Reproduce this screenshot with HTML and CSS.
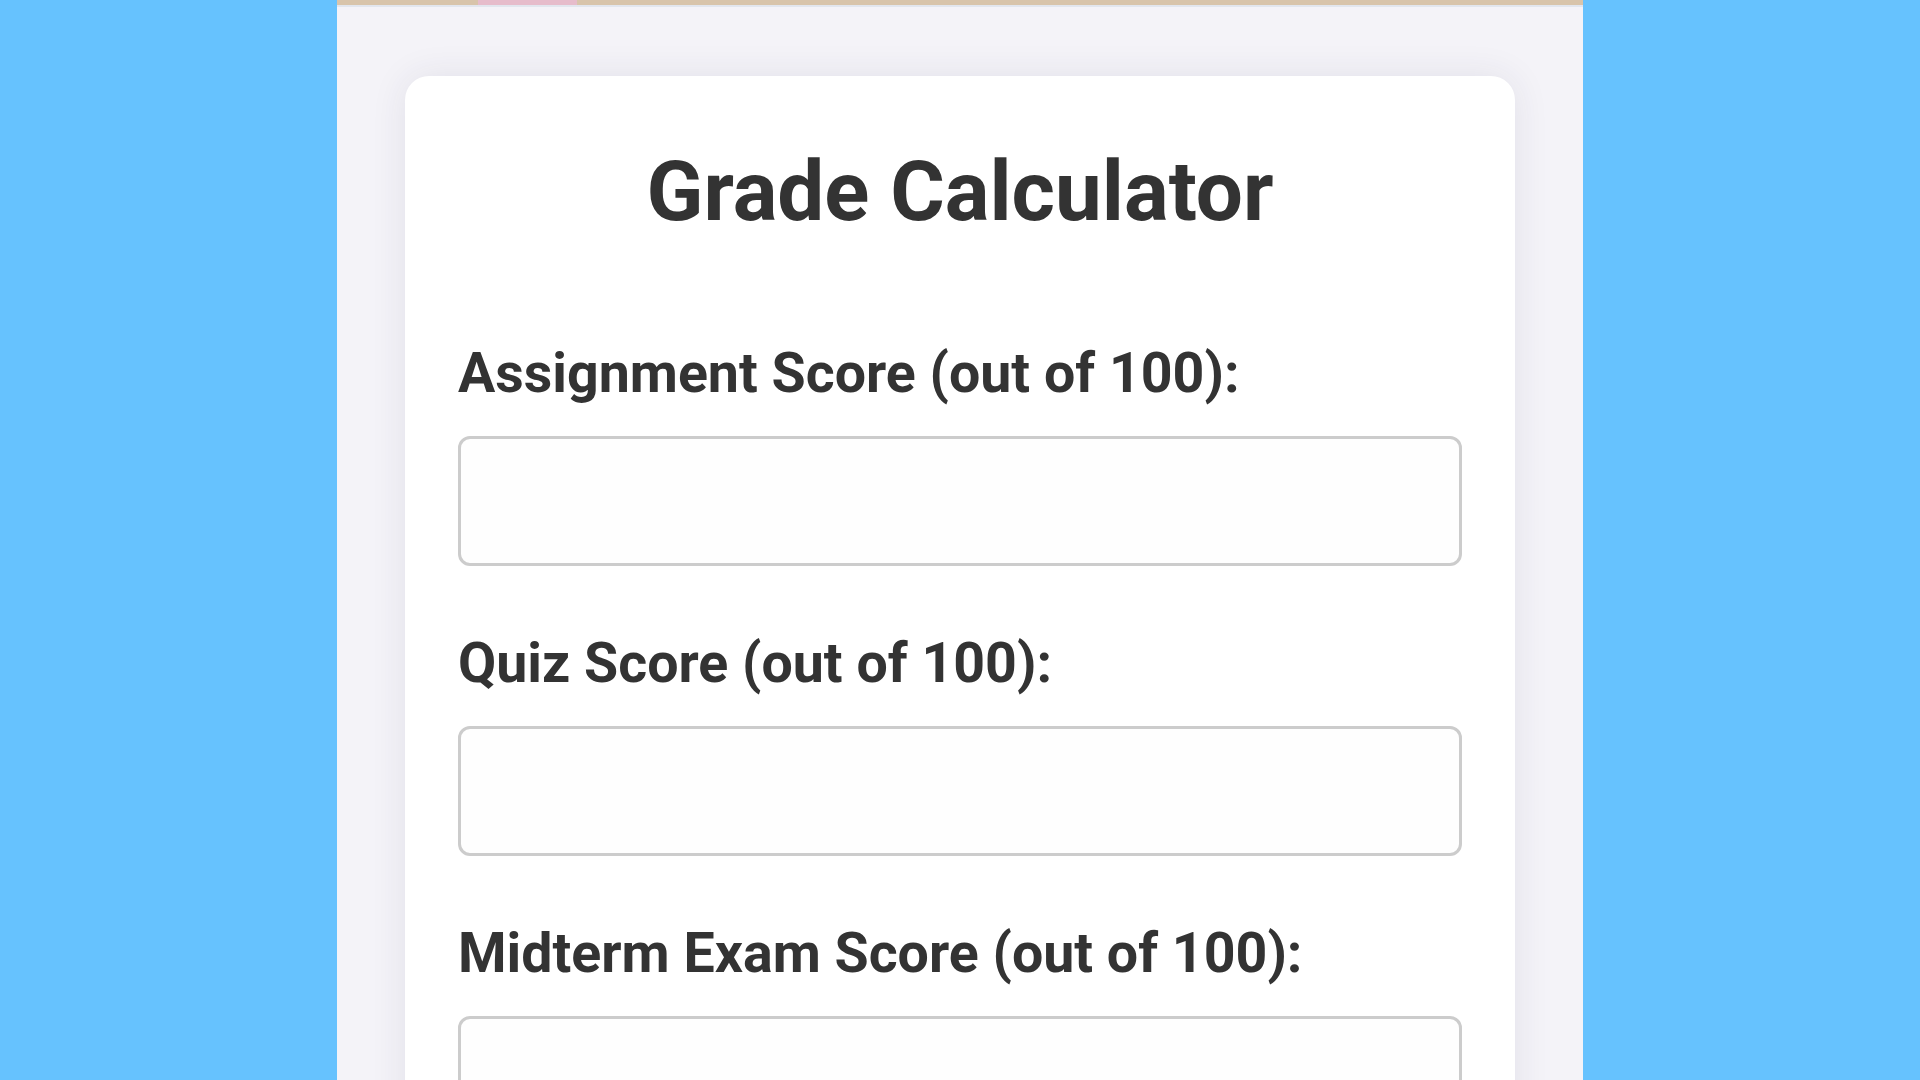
FILE: index.html
```html
<html>
    <head>
        <link rel="stylesheet" href="styles.css">
    </head>
    <body>
        <div class="page">
            <div class="strip"></div>
            <div class="calculator">
                <h1 class="title">Grade Calculator</h1>
                <form class="form">
                    <label class="field-label" for="assignment">Assignment Score (out of 100):</label>
                    <input class="field-input" type="number" id="assignment" />
                    <label class="field-label" for="quiz">Quiz Score (out of 100):</label>
                    <input class="field-input" type="number" id="quiz" />
                    <label class="field-label" for="midterm">Midterm Exam Score (out of 100):</label>
                    <input class="field-input" type="number" id="midterm" />
                </form>
            </div>
        </div>
    </body>
</html>
```

FILE: styles.css
```css
:root {
    --c-sky: #66c2fe;
    --c-page: #f4f3f8;
    --c-card: #ffffff;
    --c-text: #333333;
    --c-border: #cccccc;
    --s-card: 53px;
}
html, body {
    margin: 0;
    padding: 0;
}

body {
    background-color: var(--c-sky);
    font-family: Roboto, "Liberation Sans", sans-serif;
    color: var(--c-text);
    overflow: hidden;
}

.page {
    width: 1246px;
    min-height: 100vh;
    margin: 0 auto;
    background-color: var(--c-page);
    display: flow-root;
}

.strip {
    height: 5px;
    background: linear-gradient(to right, #d8c4ab 0, #d8c4ab 141px, #e6bccb 141px, #e6bccb 240px, #d8c4ab 240px);
    border-bottom: 2px solid #e2e6ee;
}

.calculator {
    margin: 69px 68px;
    padding: var(--s-card);
    background-color: var(--c-card);
    border-radius: 24px;
    box-shadow: 0 0 36px rgba(40, 40, 80, 0.09);
}

.title {
    margin: 14px 0 101px;
    font-size: 83.5px;
    font-weight: 700;
    text-align: center;
}

.form {
    margin: 0;
}

.field-label {
    display: block;
    margin-bottom: 30px;
    font-size: 55.5px;
    font-weight: 700;
}

.field-input {
    display: block;
    box-sizing: border-box;
    width: 100%;
    height: 130px;
    margin: 0 0 65px;
    padding: 0 20px;
    border: 3px solid var(--c-border);
    border-radius: 12px;
    background: #fefefe;
    outline: none;
    font-size: 50px;
}
```
